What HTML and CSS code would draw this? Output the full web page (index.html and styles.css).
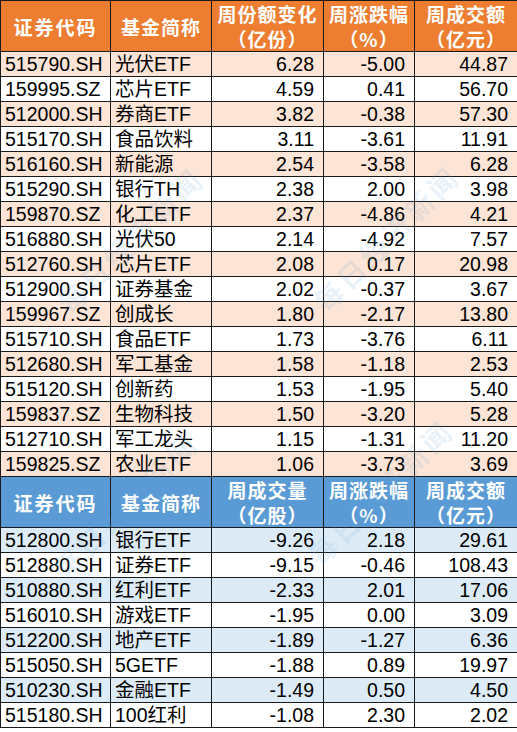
FILE: index.html
```html
<!DOCTYPE html>
<html lang="zh-CN">
<head>
<meta charset="utf-8">
<title>ETF</title>
<link rel="stylesheet" href="styles.css">
</head>
<body>
<div class="wrap">
<table class="grid">
<colgroup><col class="c1"><col class="c2"><col class="c3"><col class="c4"><col class="c5"></colgroup>
<thead>
<tr class="hd orange">
<th class="l">证券代码</th><th>基金简称</th><th>周份额变化<br>（亿份）</th><th>周涨跌幅<br>（%）</th><th>周成交额<br>（亿元）</th>
</tr>
</thead>
<tbody class="o">
<tr><td>515790.SH</td><td>光伏ETF</td><td class="n">6.28</td><td class="n">-5.00</td><td class="n">44.87</td></tr>
<tr><td>159995.SZ</td><td>芯片ETF</td><td class="n">4.59</td><td class="n">0.41</td><td class="n">56.70</td></tr>
<tr><td>512000.SH</td><td>券商ETF</td><td class="n">3.82</td><td class="n">-0.38</td><td class="n">57.30</td></tr>
<tr><td>515170.SH</td><td>食品饮料</td><td class="n">3.11</td><td class="n">-3.61</td><td class="n">11.91</td></tr>
<tr><td>516160.SH</td><td>新能源</td><td class="n">2.54</td><td class="n">-3.58</td><td class="n">6.28</td></tr>
<tr><td>515290.SH</td><td>银行TH</td><td class="n">2.38</td><td class="n">2.00</td><td class="n">3.98</td></tr>
<tr><td>159870.SZ</td><td>化工ETF</td><td class="n">2.37</td><td class="n">-4.86</td><td class="n">4.21</td></tr>
<tr><td>516880.SH</td><td>光伏50</td><td class="n">2.14</td><td class="n">-4.92</td><td class="n">7.57</td></tr>
<tr><td>512760.SH</td><td>芯片ETF</td><td class="n">2.08</td><td class="n">0.17</td><td class="n">20.98</td></tr>
<tr><td>512900.SH</td><td>证券基金</td><td class="n">2.02</td><td class="n">-0.37</td><td class="n">3.67</td></tr>
<tr><td>159967.SZ</td><td>创成长</td><td class="n">1.80</td><td class="n">-2.17</td><td class="n">13.80</td></tr>
<tr><td>515710.SH</td><td>食品ETF</td><td class="n">1.73</td><td class="n">-3.76</td><td class="n">6.11</td></tr>
<tr><td>512680.SH</td><td>军工基金</td><td class="n">1.58</td><td class="n">-1.18</td><td class="n">2.53</td></tr>
<tr><td>515120.SH</td><td>创新药</td><td class="n">1.53</td><td class="n">-1.95</td><td class="n">5.40</td></tr>
<tr><td>159837.SZ</td><td>生物科技</td><td class="n">1.50</td><td class="n">-3.20</td><td class="n">5.28</td></tr>
<tr><td>512710.SH</td><td>军工龙头</td><td class="n">1.15</td><td class="n">-1.31</td><td class="n">11.20</td></tr>
<tr><td>159825.SZ</td><td>农业ETF</td><td class="n">1.06</td><td class="n">-3.73</td><td class="n">3.69</td></tr>
</tbody>
<tbody class="b">
<tr class="hd blue">
<th class="l">证券代码</th><th>基金简称</th><th>周成交量<br>（亿股）</th><th>周涨跌幅<br>（%）</th><th>周成交额<br>（亿元）</th>
</tr>
<tr><td>512800.SH</td><td>银行ETF</td><td class="n">-9.26</td><td class="n">2.18</td><td class="n">29.61</td></tr>
<tr><td>512880.SH</td><td>证券ETF</td><td class="n">-9.15</td><td class="n">-0.46</td><td class="n">108.43</td></tr>
<tr><td>510880.SH</td><td>红利ETF</td><td class="n">-2.33</td><td class="n">2.01</td><td class="n">17.06</td></tr>
<tr><td>516010.SH</td><td>游戏ETF</td><td class="n">-1.95</td><td class="n">0.00</td><td class="n">3.09</td></tr>
<tr><td>512200.SH</td><td>地产ETF</td><td class="n">-1.89</td><td class="n">-1.27</td><td class="n">6.36</td></tr>
<tr><td>515050.SH</td><td>5GETF</td><td class="n">-1.88</td><td class="n">0.89</td><td class="n">19.97</td></tr>
<tr><td>510230.SH</td><td>金融ETF</td><td class="n">-1.49</td><td class="n">0.50</td><td class="n">4.50</td></tr>
<tr><td>515180.SH</td><td>100红利</td><td class="n">-1.08</td><td class="n">2.30</td><td class="n">2.02</td></tr>
</tbody>
</table>
<div class="wm wm1">每日经济新闻</div>
<div class="wm wm2">每日经济新闻</div>
<div class="wm wm3">每日经济新闻</div>
<div class="wm wm4">每日经济新闻</div>
</div>
</body>
</html>
```
FILE: styles.css
```css
html, body {
  margin: 0;
  padding: 0;
  background: #fff;
}
.wrap {
  position: relative;
  width: 517px;
  height: 732px;
  overflow: hidden;
}
.grid {
  border-collapse: collapse;
  table-layout: fixed;
  width: 517px;
  font-family: "Liberation Sans", "Noto Sans CJK SC", sans-serif;
  font-size: 19.5px;
  color: #000;
}
.c1 { width: 110px; }
.c2 { width: 101px; }
.c3 { width: 112px; }
.c4 { width: 91px; }
.c5 { width: 103px; }
.grid td, .grid th {
  border: 1px solid #1a1a1a;
  padding: 0 4px;
  line-height: 23px;
  height: 24px;
  white-space: nowrap;
  overflow: hidden;
  text-align: left;
}
.grid td.n {
  text-align: right;
  padding-right: 9px;
}
.grid tr.hd th {
  height: 50px;
  color: #fff;
  font-family: "Noto Sans CJK SC", sans-serif;
  font-weight: 700;
  font-size: 19px;
  line-height: 25px;
  text-align: center;
  padding: 0;
  letter-spacing: 1px;
}
.grid tr.hd th.l { letter-spacing: 2px; }
.orange th { background: #ed7d31; }
.blue th { background: #5b9bd5; }
tbody.o tr:nth-child(odd) td { background: #fce4d6; }
tbody.b tr:nth-child(even) td { background: #ddebf7; }
.wm {
  position: absolute;
  font-family: "Noto Sans CJK SC", sans-serif;
  font-weight: 700;
  font-size: 28px;
  line-height: 40px;
  letter-spacing: 4px;
  color: rgba(91, 155, 213, 0.12);
  transform: rotate(-45deg);
  white-space: nowrap;
  pointer-events: none;
}
.wm1 { left: 290px; top: 218px; }
.wm2 { left: 284px; top: 472px; }
.wm3 { left: 34px; top: 220px; }
.wm4 { left: 29px; top: 485px; }
```
